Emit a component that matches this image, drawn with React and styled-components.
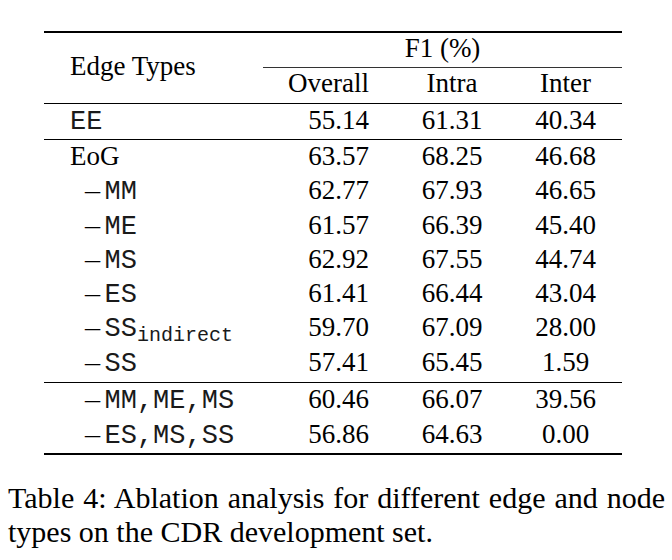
import React from 'react';
import styled, { createGlobalStyle } from 'styled-components';

const Global = createGlobalStyle`
  html, body { margin: 0; padding: 0; background: #fff; }
  body { font-family: "Liberation Serif", "Times New Roman", serif; color: #000; }
`;

const COLS = '219px 132px 114px 113px';

const Page = styled.div`
  width: 672px;
  height: 560px;
  overflow: hidden;
  box-sizing: border-box;
  padding-top: 31px;
  display: flex;
  flex-direction: column;
  background: #fff;
`;

const Table = styled.div`
  margin-left: 44px;
  width: 578px;
  border-top: 2px solid #000;
  border-bottom: 2px solid #000;
  font-size: 27px;
`;

const Header = styled.div`
  display: grid;
  grid-template-columns: ${COLS};
  grid-template-rows: 35px 35px;
  border-bottom: 1px solid #000;
`;

const HeadLabel = styled.div`
  grid-row: 1 / 3;
  grid-column: 1;
  display: flex;
  align-items: center;
  padding: 0 0 4px 26px;
  line-height: 30px;
  white-space: nowrap;
`;

const SpanHead = styled.div`
  grid-row: 1;
  grid-column: 2 / 5;
  box-sizing: border-box;
  height: 35px;
  line-height: 31px;
  padding-bottom: 3px;
  border-bottom: 1px solid #333;
  text-align: center;
`;

const SubHead = styled.div`
  grid-row: 2;
  grid-column: ${p => p.$col};
  box-sizing: border-box;
  height: 35px;
  line-height: 30.7px;
  padding-bottom: 4.3px;
  text-align: ${p => (p.$right ? 'right' : 'center')};
  padding-right: ${p => (p.$right ? '26px' : '0')};
`;

const Group = styled.div`
  padding-top: ${p => p.$pt || 0}px;
  padding-bottom: ${p => p.$pb || 0}px;
  border-bottom: ${p => (p.$rule ? '1px solid #000' : 'none')};
`;

const Row = styled.div`
  display: grid;
  grid-template-columns: ${COLS};
  box-sizing: border-box;
  height: ${p => p.$h}px;
  line-height: ${p => p.$lh}px;
  white-space: nowrap;
`;

const LabelCell = styled.div`
  padding-left: ${p => (p.$indent ? 41 : 26)}px;
`;

const NumCell = styled.div`
  text-align: ${p => (p.$right ? 'right' : 'center')};
  padding-right: ${p => (p.$right ? '26px' : '0')};
`;

const Minus = styled.span`
  display: inline-block;
  transform: scaleX(1.12);
  transform-origin: left center;
  margin-right: 6px;
`;

const Mono = styled.span`
  font-family: "Liberation Mono", "DejaVu Sans Mono", monospace;
  color: #1a1a1a;
`;

const Sub = styled.span`
  font-size: 20px;
  vertical-align: -5px;
`;

const Caption = styled.p`
  margin: 26px 0 0 8px;
  width: 657px;
  font-size: 30px;
  line-height: 34px;
  text-align: justify;
`;

const groups = [
  {
    pt: 0, pb: 0, rule: true, h: 35, lh: 32,
    rows: [{ mono: 'EE', v: ['55.14', '61.31', '40.34'] }],
  },
  {
    pt: 0, pb: 1.5, rule: true, h: 34.3, lh: 32.3,
    rows: [
      { text: 'EoG', v: ['63.57', '68.25', '46.68'] },
      { minus: true, mono: 'MM', v: ['62.77', '67.93', '46.65'] },
      { minus: true, mono: 'ME', v: ['61.57', '66.39', '45.40'] },
      { minus: true, mono: 'MS', v: ['62.92', '67.55', '44.74'] },
      { minus: true, mono: 'ES', v: ['61.41', '66.44', '43.04'] },
      { minus: true, mono: 'SS', sub: 'indirect', v: ['59.70', '67.09', '28.00'] },
      { minus: true, mono: 'SS', v: ['57.41', '65.45', '1.59'] },
    ],
  },
  {
    pt: 0.4, pb: 0, rule: false, h: 35, lh: 32.3,
    rows: [
      { minus: true, mono: 'MM,ME,MS', v: ['60.46', '66.07', '39.56'] },
      { minus: true, mono: 'ES,MS,SS', v: ['56.86', '64.63', '0.00'] },
    ],
  },
];

export default function App() {
  return (
    <Page>
      <Global />
      <Table>
        <Header>
          <HeadLabel>Edge Types</HeadLabel>
          <SpanHead>F1 (%)</SpanHead>
          <SubHead $right $col={2}>Overall</SubHead>
          <SubHead $col={3}>Intra</SubHead>
          <SubHead $col={4}>Inter</SubHead>
        </Header>
        {groups.map((g, gi) => (
          <Group key={gi} $pt={g.pt} $pb={g.pb} $rule={g.rule}>
            {g.rows.map((r, ri) => (
              <Row key={ri} $h={g.h} $lh={g.lh}>
                <LabelCell $indent={r.minus}>
                  {r.minus && <Minus>–</Minus>}
                  {r.text}
                  {r.mono && <Mono>{r.mono}</Mono>}
                  {r.sub && (
                    <Mono>
                      <Sub>{r.sub}</Sub>
                    </Mono>
                  )}
                </LabelCell>
                <NumCell $right>{r.v[0]}</NumCell>
                <NumCell>{r.v[1]}</NumCell>
                <NumCell>{r.v[2]}</NumCell>
              </Row>
            ))}
          </Group>
        ))}
      </Table>
      <Caption>
        Table 4: Ablation analysis for different edge and node types on the CDR development set.
      </Caption>
    </Page>
  );
}
